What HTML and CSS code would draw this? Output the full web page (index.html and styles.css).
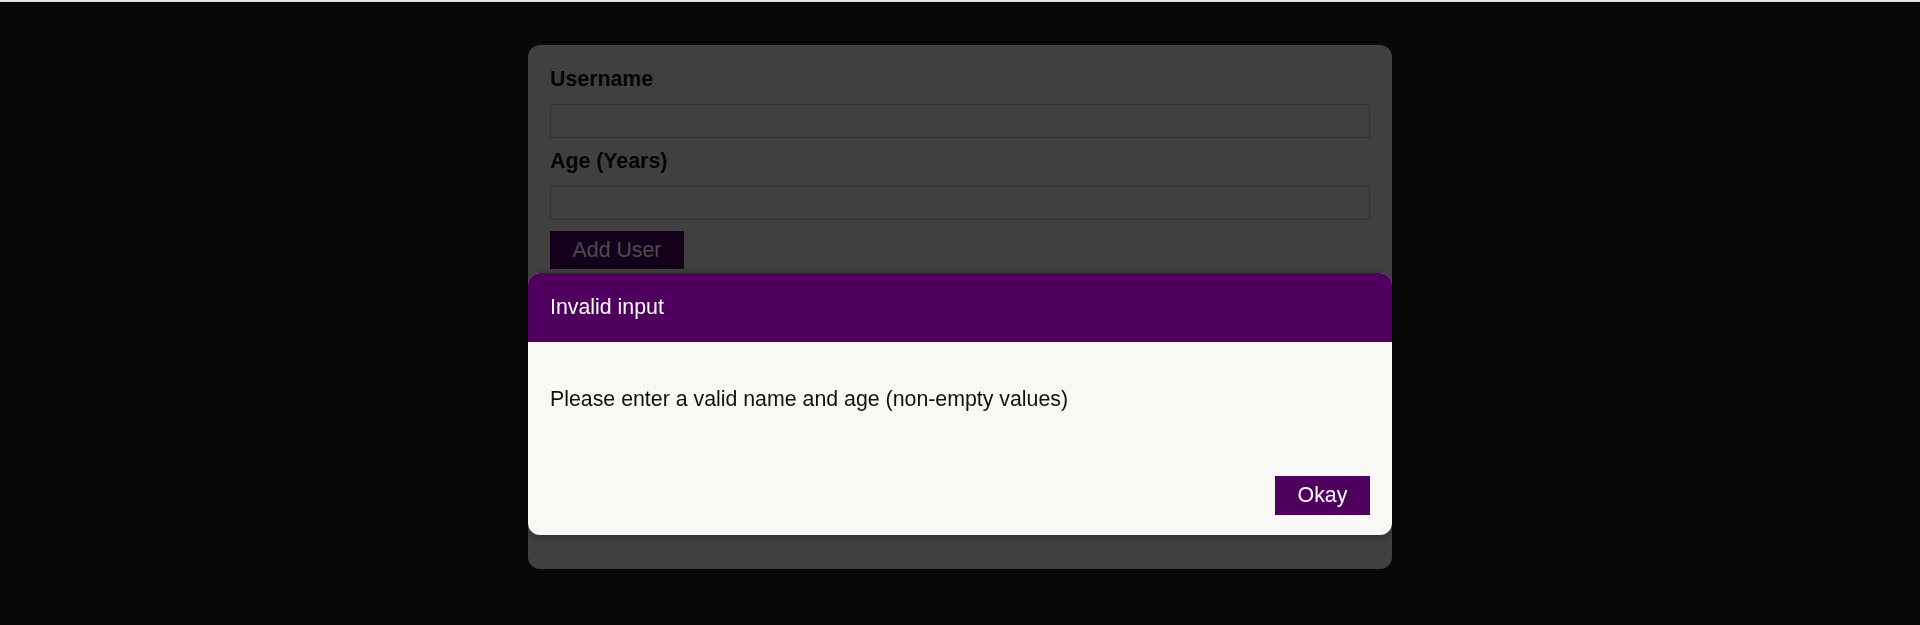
FILE: index.html
```html
<!DOCTYPE html>
<html lang="en">
<head>
<meta charset="utf-8">
<title>Add User</title>
<link rel="stylesheet" href="styles.css">
</head>
<body>
<div class="topbar"></div>
<main class="page">
  <section class="card">
    <form class="form">
      <label class="label" for="username">Username</label>
      <input class="input" id="username" type="text">
      <label class="label" for="age">Age (Years)</label>
      <input class="input" id="age" type="number">
      <button class="btn btn-dim" type="button">Add User</button>
    </form>
  </section>
</main>
<div class="modal">
  <header class="modal-header">Invalid input</header>
  <div class="modal-body">
    <p class="modal-text">Please enter a valid name and age (non-empty values)</p>
    <footer class="modal-actions">
      <button class="btn btn-okay" type="button">Okay</button>
    </footer>
  </div>
</div>
</body>
</html>
```
FILE: styles.css
```css
* { box-sizing: border-box; }
html, body { margin: 0; padding: 0; }
body {
  background: #080808;
  font-family: "Liberation Sans", Arial, sans-serif;
  height: 625px;
  overflow: hidden;
}
.topbar {
  height: 2px;
  background: #e2e2e2;
}
.page {
  display: flex;
  justify-content: center;
  padding-top: 43px;
}
.card {
  width: 864px;
  height: 524px;
  background: #404040;
  border-radius: 12px;
  padding: 22px;
}
.form {
  display: flex;
  flex-direction: column;
  align-items: flex-start;
}
.label {
  display: block;
  font-size: 21.33px;
  font-weight: bold;
  line-height: 24px;
  color: #050505;
  margin-bottom: 13px;
}
.input {
  width: 100%;
  height: 34px;
  background: transparent;
  border: 1px solid #333333;
  margin: 0 0 11px 0;
  padding: 0 6px;
  font: inherit;
}
.btn {
  font-family: "Liberation Sans", Arial, sans-serif;
  font-size: 21.33px;
  border: none;
  padding: 0;
  cursor: pointer;
}
.btn-dim {
  width: 134px;
  height: 38px;
  background: #14001a;
  color: #4b4b4b;
}
.modal {
  position: fixed;
  top: 273px;
  left: 528px;
  width: 864px;
  height: 262px;
  border-radius: 12px;
  overflow: hidden;
  background: #f9f8f4;
  box-shadow: 0 2px 8px rgba(0, 0, 0, 0.3);
  display: flex;
  flex-direction: column;
}
.modal-header {
  height: 69px;
  background: #4f005f;
  color: #ffffff;
  font-size: 21.33px;
  display: flex;
  align-items: center;
  padding: 0 22px;
}
.modal-body {
  flex: 1;
  display: flex;
  flex-direction: column;
  padding: 45px 22px 20px;
}
.modal-text {
  margin: 0;
  font-size: 21.33px;
  line-height: 24px;
  color: #111111;
}
.modal-actions {
  margin-top: auto;
  display: flex;
  justify-content: flex-end;
}
.btn-okay {
  width: 95px;
  height: 39px;
  background: #4f005f;
  color: #ffffff;
}
```
